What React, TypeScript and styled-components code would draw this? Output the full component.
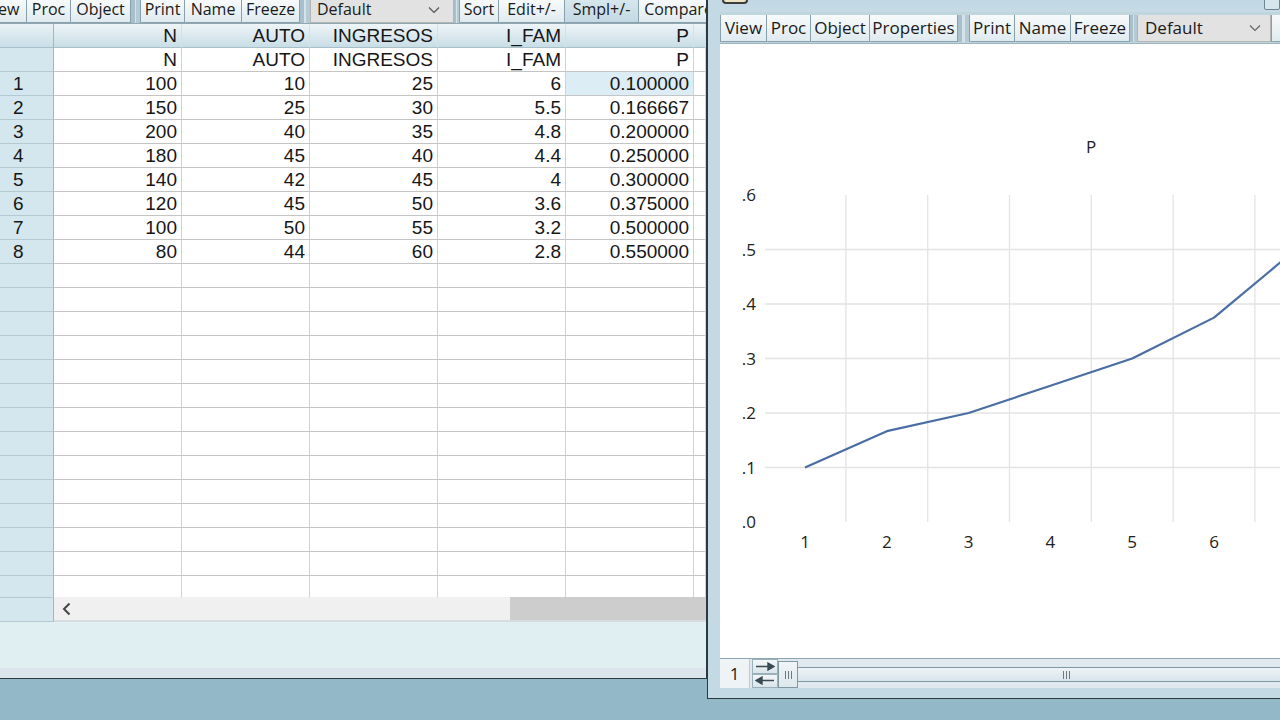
import React from "react"
import styled, { createGlobalStyle } from "styled-components"

const records = [
  { n: "100", auto: "10", ing: "25", fam: "6", p: "0.100000" },
  { n: "150", auto: "25", ing: "30", fam: "5.5", p: "0.166667" },
  { n: "200", auto: "40", ing: "35", fam: "4.8", p: "0.200000" },
  { n: "180", auto: "45", ing: "40", fam: "4.4", p: "0.250000" },
  { n: "140", auto: "42", ing: "45", fam: "4", p: "0.300000" },
  { n: "120", auto: "45", ing: "50", fam: "3.6", p: "0.375000" },
  { n: "100", auto: "50", ing: "55", fam: "3.2", p: "0.500000" },
  { n: "80", auto: "44", ing: "60", fam: "2.8", p: "0.550000" },
]

const columns = ["N", "AUTO", "INGRESOS", "I_FAM", "P"]
const pValues = [0.1, 0.166667, 0.2, 0.25, 0.3, 0.375, 0.5, 0.55]
const EMPTY_ROWS = 14

// chart geometry (relative to the white graph area)
const X0 = 85
const DX = 81.8
const yOf = (v: number) => 478 - v * 545

const GlobalStyle = createGlobalStyle`
  * {
    box-sizing: border-box;
  }
  html, body {
    margin: 0;
    padding: 0;
    width: 1280px;
    height: 720px;
    overflow: hidden;
    background: #93b9c8;
  }
  body {
    font-family: "Liberation Sans", Arial, sans-serif;
    color: #111;
  }
`

const Desktop = styled.div`
  position: relative;
  width: 1280px;
  height: 720px;
  overflow: hidden;
  background: #93b9c8;
`

const Window = styled.div<{ $left: number; $top: number; $width: number; $height: number }>`
  position: absolute;
  left: ${(p) => p.$left}px;
  top: ${(p) => p.$top}px;
  width: ${(p) => p.$width}px;
  height: ${(p) => p.$height}px;
  display: flex;
  flex-direction: column;
  overflow: hidden;
`

const SheetWindow = styled(Window)`
  background: #e0eff1;
  border-right: 1px solid #2b3a40;
  border-bottom: 1px solid #2b3a40;
`

const GraphWindow = styled(Window)`
  background: #c3d9e4;
  border-left: 1px solid #2b3a40;
  border-bottom: 1px solid #2b3a40;
  padding: 0 0 10px 12px;
`

const Toolbar = styled.div<{ $height: number; $pad: string }>`
  flex: none;
  display: flex;
  align-items: stretch;
  height: ${(p) => p.$height}px;
  padding: ${(p) => p.$pad};
  background: #c0d6df;
`

const ToolGroup = styled.div`
  display: flex;
  flex: none;
  border-left: 1px solid #86a1ac;
`

const ToolButton = styled.div<{ $w: number; $size: number; $lift?: number; $active?: boolean }>`
  flex: none;
  width: ${(p) => p.$w}px;
  display: flex;
  align-items: center;
  justify-content: center;
  padding-bottom: ${(p) => p.$lift ?? 0}px;
  font-family: "Open Sans", "Noto Sans", sans-serif;
  font-size: ${(p) => p.$size}px;
  line-height: 1.1;
  color: #1a1a1a;
  white-space: nowrap;
  overflow: hidden;
  background: ${(p) =>
    p.$active ? "linear-gradient(#d6e7ee, #c4d9e2)" : "linear-gradient(#f7fafb, #e0ebef)"};
  border-right: 1px solid #86a1ac;
  border-bottom: 1px solid #86a1ac;
  border-radius: 0 0 1px 1px;
`

const ToolSep = styled.div<{ $w: number }>`
  flex: none;
  width: ${(p) => p.$w}px;
  background: linear-gradient(90deg, #a7c0cb 0, #a7c0cb 40%, #d5e3e9 40%, #d5e3e9 60%, #b4cad4 60%);
`

const Dropdown = styled.div<{ $w: number; $size: number; $pad: string }>`
  flex: none;
  width: ${(p) => p.$w}px;
  display: flex;
  align-items: center;
  justify-content: space-between;
  padding: ${(p) => p.$pad};
  font-family: "Open Sans", "Noto Sans", sans-serif;
  font-size: ${(p) => p.$size}px;
  line-height: 1.1;
  color: #1a1a1a;
  background: #e2e2e2;
  border: 1px solid #b4b4b4;
  border-top: none;
`

const Sheet = styled.div`
  flex: none;
  height: 574px;
  overflow: hidden;
  background: #fff;
  border-top: 1px solid #8fa8b2;
`

const SheetRow = styled.div`
  display: grid;
  grid-template-columns: 78px repeat(5, 128px) 1fr;
  height: 24px;
`

type CellKind = "corner" | "head" | "rowhead" | "data"

const cellBg: Record<CellKind, string> = {
  corner: "linear-gradient(#e9f2f6, #cadee7)",
  head: "linear-gradient(#eef5f8, #c9dde6)",
  rowhead: "#d4e6ee",
  data: "#ffffff",
}

const Cell = styled.div<{ $kind: CellKind; $selected?: boolean }>`
  height: 24px;
  line-height: 23px;
  font-size: 19px;
  white-space: nowrap;
  overflow: hidden;
  color: #161616;
  background: ${(p) => (p.$selected ? "#dcedf5" : cellBg[p.$kind])};
  text-align: ${(p) => (p.$kind === "rowhead" ? "left" : "right")};
  padding: ${(p) => (p.$kind === "rowhead" ? "0 0 0 37px" : "0 4px 0 0")};
  border-right: 1px solid ${(p) => (p.$kind === "rowhead" || p.$kind === "corner" ? "#9fb8c3" : p.$kind === "head" ? "#d3e2e8" : "#d2d2d2")};
  border-bottom: 1px solid ${(p) => (p.$kind === "head" || p.$kind === "corner" ? "#a8c0ca" : p.$kind === "rowhead" ? "#b4c9d2" : "#c4c4c4")};
`

const ScrollRow = styled.div`
  flex: none;
  display: grid;
  grid-template-columns: 78px 456px 1fr;
  height: 25px;
`

const ScrollCorner = styled.div`
  background: #d4e6ee;
  border-right: 1px solid #9fb8c3;
  border-top: 1px solid #b4c9d2;
  border-bottom: 1px solid #b4c9d2;
`

const ScrollTrack = styled.div`
  display: flex;
  align-items: center;
  padding-left: 8px;
  background: #f0f0f0;
  border-bottom: 2px solid #d6dcdf;
`

const ScrollThumb = styled.div`
  background: #cdcdcd;
  border-bottom: 2px solid #d6dcdf;
`

const StatusArea = styled.div`
  flex: 1;
  display: flex;
  flex-direction: column;
  justify-content: flex-end;
  background: #e0eff1;
`

const StatusBand = styled.div`
  height: 10px;
  background: #dce4ec;
`

const TitleBar = styled.div`
  flex: none;
  height: 34px;
  display: flex;
  align-items: flex-end;
  justify-content: space-between;
  padding: 0 27px 8px 2px;
  background: linear-gradient(#b7cfdc, #c6dbe6);
`

const TitleIcon = styled.div`
  width: 26px;
  height: 18px;
  border: 2px solid #3c3c3c;
  border-radius: 4px;
  background: #eee6c4;
`

const TitleButton = styled.div`
  width: 16px;
  height: 20px;
  margin-bottom: -6px;
  border: 1px solid #6d8591;
  border-radius: 2px;
  background: #d7e6ee;
`

const GraphArea = styled.div`
  flex: 1;
  position: relative;
  overflow: hidden;
  background: #fff;
  border-top: 1px solid #9db4be;
`

const GraphBar = styled.div`
  flex: none;
  height: 30px;
  display: flex;
  align-items: stretch;
  background: #dfe9ee;
  border-top: 1px solid #8ea6b1;
`

const PageBox = styled.div`
  width: 30px;
  flex: none;
  display: flex;
  align-items: center;
  justify-content: center;
  font-family: "Open Sans", "Noto Sans", sans-serif;
  font-size: 17px;
  color: #222;
  background: #eef3f6;
  border-right: 1px solid #b9cbd3;
`

const ArrowPair = styled.div`
  width: 26px;
  flex: none;
  margin-left: 2px;
  display: flex;
  flex-direction: column;
`

const ArrowBtn = styled.div`
  flex: 1;
  display: flex;
  align-items: center;
  justify-content: center;
  background: linear-gradient(#f3f7f9, #d9e5ea);
  border: 1px solid #9ab0ba;
`

const ThumbBox = styled.div`
  width: 20px;
  flex: none;
  display: flex;
  align-items: center;
  justify-content: center;
  margin: 2px 0 0;
  border: 1px solid #7f98a3;
  background: linear-gradient(#f0f5f7, #dde8ed);
`

const LongBar = styled.div`
  width: 536px;
  flex: none;
  display: flex;
  align-items: center;
  justify-content: center;
  margin: 8px 0 6px;
  border-top: 1px solid #7f98a3;
  border-bottom: 1px solid #7f98a3;
  background: linear-gradient(#edf3f6, #d9e5eb);
`

const Chevron = ({ color = "#555" }: { color?: string }) => (
  <svg width="12" height="8" viewBox="0 0 12 8">
    <path d="M1 1.5 L6 6.5 L11 1.5" fill="none" stroke={color} strokeWidth="1.2" />
  </svg>
)

const LeftChevron = () => (
  <svg width="9" height="14" viewBox="0 0 9 14">
    <path d="M7.5 1.5 L2 7 L7.5 12.5" fill="none" stroke="#444" strokeWidth="2" />
  </svg>
)

const Grip = () => (
  <svg width="7" height="8" viewBox="0 0 7 8">
    <path d="M0.5 0 V8 M3.5 0 V8 M6.5 0 V8" stroke="#6a7a82" strokeWidth="1" />
  </svg>
)

const Arrow = ({ dir }: { dir: "left" | "right" }) => (
  <svg width="20" height="9" viewBox="0 0 20 9">
    {dir === "right" ? (
      <path d="M1 4.5 H14 M13 1 L19 4.5 L13 8 Z" stroke="#3a4a52" strokeWidth="1.4" fill="#3a4a52" />
    ) : (
      <path d="M19 4.5 H6 M7 1 L1 4.5 L7 8 Z" stroke="#3a4a52" strokeWidth="1.4" fill="#3a4a52" />
    )}
  </svg>
)

function LineChart() {
  const pts = pValues.map((v, i) => `${X0 + DX * i},${yOf(v)}`).join(" ")
  const labelFont = { fontFamily: "'Open Sans', 'Noto Sans', sans-serif", fontSize: 17, fill: "#222" }
  return (
    <svg width="640" height="615" viewBox="0 0 640 615">
      {[0.1, 0.2, 0.3, 0.4, 0.5].map((v) => (
        <line key={v} x1="45" x2="640" y1={yOf(v)} y2={yOf(v)} stroke="#e3e3e3" strokeWidth="1.3" />
      ))}
      {[0, 1, 2, 3, 4, 5, 6].map((k) => (
        <line
          key={k}
          x1={X0 + DX * (k + 0.5)}
          x2={X0 + DX * (k + 0.5)}
          y1={yOf(0.6)}
          y2={yOf(0)}
          stroke="#e3e3e3"
          strokeWidth="1.3"
        />
      ))}
      {[0.6, 0.5, 0.4, 0.3, 0.2, 0.1, 0].map((v) => (
        <text key={v} x="36" y={yOf(v) + 6} textAnchor="end" style={labelFont}>
          {"." + Math.round(v * 10)}
        </text>
      ))}
      {[1, 2, 3, 4, 5, 6].map((n, i) => (
        <text key={n} x={X0 + DX * i} y="504" textAnchor="middle" style={labelFont}>
          {n}
        </text>
      ))}
      <text x="371" y="109" textAnchor="middle" style={labelFont}>
        P
      </text>
      <polyline points={pts} fill="none" stroke="#4a6da3" strokeWidth="2.2" strokeLinejoin="round" />
    </svg>
  )
}

function SpreadsheetWindow() {
  return (
    <SheetWindow $left={-24} $top={0} $width={731} $height={679}>
      <Toolbar $height={23} $pad="0 0 0 1px">
        <ToolGroup>
          <ToolButton $w={49} $size={16} $lift={2}>View</ToolButton>
          <ToolButton $w={44} $size={16} $lift={2}>Proc</ToolButton>
          <ToolButton $w={60} $size={16} $lift={2}>Object</ToolButton>
        </ToolGroup>
        <ToolSep $w={9} />
        <ToolGroup>
          <ToolButton $w={44} $size={16} $lift={2}>Print</ToolButton>
          <ToolButton $w={57} $size={16} $lift={2}>Name</ToolButton>
          <ToolButton $w={58} $size={16} $lift={2}>Freeze</ToolButton>
        </ToolGroup>
        <ToolSep $w={10} />
        <Dropdown $w={144} $size={16} $pad="0 13px 2px 6px">
          <span>Default</span>
          <Chevron />
        </Dropdown>
        <ToolSep $w={5} />
        <ToolGroup>
          <ToolButton $w={39} $size={16} $lift={2}>Sort</ToolButton>
          <ToolButton $w={66} $size={16} $lift={2}>Edit+/-</ToolButton>
          <ToolButton $w={74} $size={16} $lift={2} $active>Smpl+/-</ToolButton>
          <ToolButton $w={80} $size={16} $lift={2}>Compare</ToolButton>
        </ToolGroup>
      </Toolbar>
      <Sheet>
        <SheetRow>
          <Cell $kind="corner" />
          {columns.map((c) => (
            <Cell key={c} $kind="head">{c}</Cell>
          ))}
          <Cell $kind="head" />
        </SheetRow>
        <SheetRow>
          <Cell $kind="rowhead" />
          {columns.map((c) => (
            <Cell key={c} $kind="data">{c}</Cell>
          ))}
          <Cell $kind="data" />
        </SheetRow>
        {records.map((r, i) => (
          <SheetRow key={i}>
            <Cell $kind="rowhead">{i + 1}</Cell>
            <Cell $kind="data">{r.n}</Cell>
            <Cell $kind="data">{r.auto}</Cell>
            <Cell $kind="data">{r.ing}</Cell>
            <Cell $kind="data">{r.fam}</Cell>
            <Cell $kind="data" $selected={i === 0}>{r.p}</Cell>
            <Cell $kind="data" />
          </SheetRow>
        ))}
        {Array.from({ length: EMPTY_ROWS }).map((_, i) => (
          <SheetRow key={"e" + i}>
            <Cell $kind="rowhead" />
            <Cell $kind="data" />
            <Cell $kind="data" />
            <Cell $kind="data" />
            <Cell $kind="data" />
            <Cell $kind="data" />
            <Cell $kind="data" />
          </SheetRow>
        ))}
      </Sheet>
      <ScrollRow>
        <ScrollCorner />
        <ScrollTrack>
          <LeftChevron />
        </ScrollTrack>
        <ScrollThumb />
      </ScrollRow>
      <StatusArea>
        <StatusBand />
      </StatusArea>
    </SheetWindow>
  )
}

function ChartWindow() {
  return (
    <GraphWindow $left={707} $top={-22} $width={600} $height={721}>
      <TitleBar>
        <TitleIcon />
        <TitleButton />
      </TitleBar>
      <Toolbar $height={31} $pad="3px 0 1px 0">
        <ToolGroup>
          <ToolButton $w={46} $size={17}>View</ToolButton>
          <ToolButton $w={44} $size={17}>Proc</ToolButton>
          <ToolButton $w={59} $size={17}>Object</ToolButton>
          <ToolButton $w={88} $size={17}>Properties</ToolButton>
        </ToolGroup>
        <ToolSep $w={11} />
        <ToolGroup>
          <ToolButton $w={45} $size={17}>Print</ToolButton>
          <ToolButton $w={56} $size={17}>Name</ToolButton>
          <ToolButton $w={59} $size={17}>Freeze</ToolButton>
        </ToolGroup>
        <ToolSep $w={7} />
        <Dropdown $w={134} $size={17} $pad="0 9px 0 7px">
          <span>Default</span>
          <Chevron color="#666" />
        </Dropdown>
        <ToolGroup>
          <ToolButton $w={40} $size={17} />
        </ToolGroup>
      </Toolbar>
      <GraphArea>
        <LineChart />
      </GraphArea>
      <GraphBar>
        <PageBox>1</PageBox>
        <ArrowPair>
          <ArrowBtn>
            <Arrow dir="right" />
          </ArrowBtn>
          <ArrowBtn>
            <Arrow dir="left" />
          </ArrowBtn>
        </ArrowPair>
        <ThumbBox>
          <Grip />
        </ThumbBox>
        <LongBar>
          <Grip />
        </LongBar>
      </GraphBar>
    </GraphWindow>
  )
}

export default function App() {
  return (
    <>
      <GlobalStyle />
      <Desktop>
        <SpreadsheetWindow />
        <ChartWindow />
      </Desktop>
    </>
  )
}
